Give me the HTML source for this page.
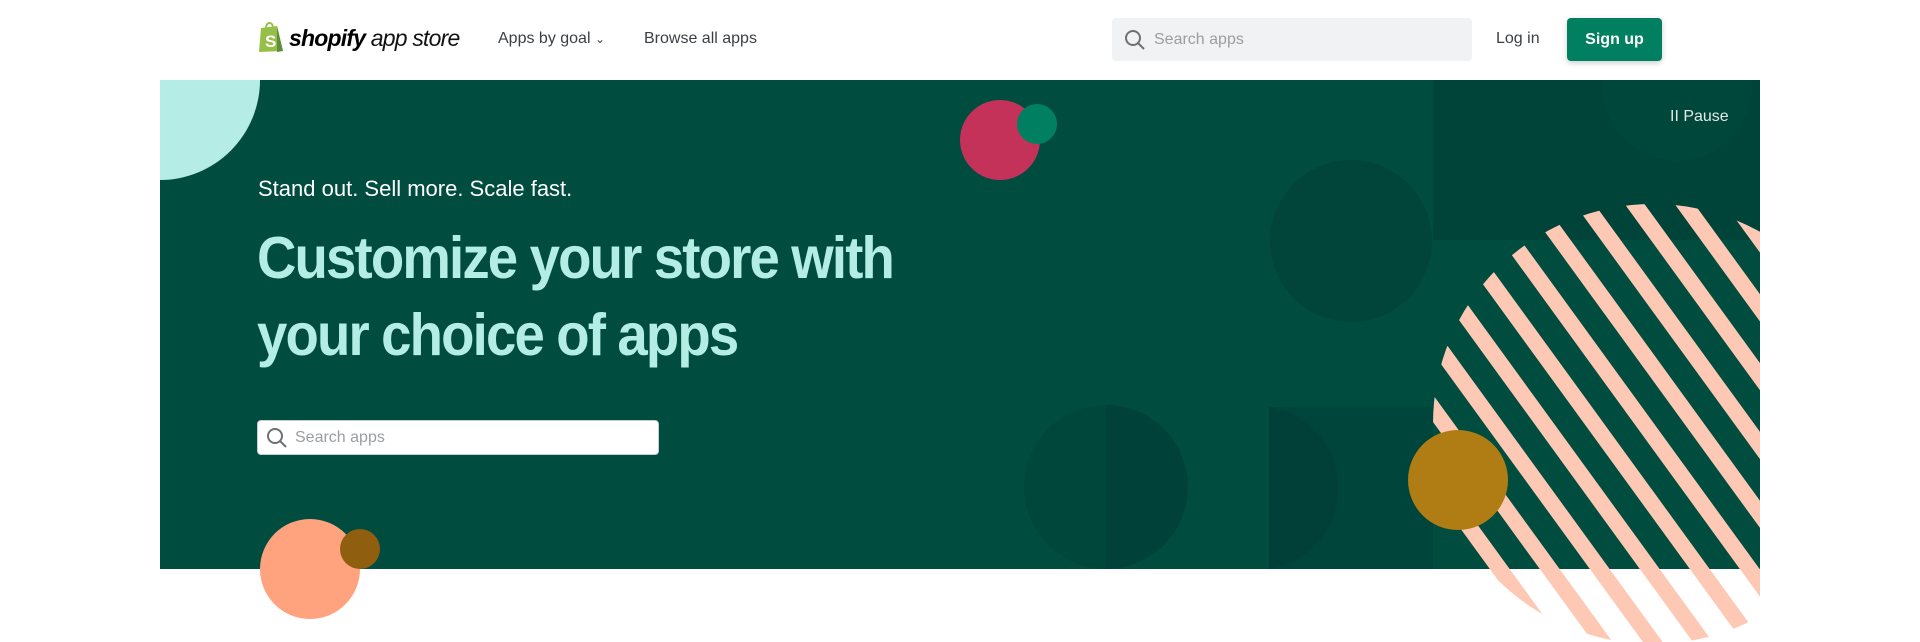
<!DOCTYPE html>
<html><head><meta charset="utf-8"><style>
*{margin:0;padding:0;box-sizing:border-box}
html,body{width:1920px;height:642px;overflow:hidden}
body{background:#fff;font-family:"Liberation Sans",sans-serif;position:relative}
.hdr{position:absolute;left:0;top:0;width:1920px;height:80px}
.nav{position:absolute;top:30px;font-size:16px;color:#3b3f45}
.sbox{position:absolute;left:1112px;top:18px;width:360px;height:43px;background:#f1f2f3;border-radius:4px}
.sbox span{position:absolute;left:42px;top:13px;font-size:16px;color:#9a9ea3}
.btn{position:absolute;left:1567px;top:18px;width:95px;height:43px;background:#008060;border-radius:4px;color:#fff;font-weight:bold;font-size:16px;text-align:center;line-height:43px;box-shadow:0 2px 6px rgba(0,0,0,.2)}
.banner{position:absolute;left:160px;top:80px;width:1600px;height:489px;background:#004c3f;overflow:hidden}
.tag{position:absolute;left:98px;top:96px;font-size:22px;color:#fff}
h1{position:absolute;left:97px;top:140px;font-size:59px;line-height:77px;color:#b3ede4;font-weight:bold;letter-spacing:-2px;white-space:nowrap;transform:scaleX(.925);transform-origin:left top}
.bs{position:absolute;left:97px;top:340px;width:402px;height:35px;background:#fff;border:1px solid #c4cdd5;border-radius:4px}
.bs span{position:absolute;left:37px;top:8px;font-size:16px;color:#9a9ea3}
.pause{position:absolute;left:1510px;top:28px;color:#e3e8e6;font-size:16px}
</style></head><body>
<div class="hdr">
<svg style="position:absolute;left:257px;top:20px" width="28" height="33" viewBox="0 0 28 33"><path d="M4 8 L20 6 L26 31 L2 32 Z" fill="#95bf47"/><path d="M20 6 L26 31 L20 32 Z" fill="#5e8e3e"/><path d="M9 8 C9 2 15 1 16 7" stroke="#95bf47" stroke-width="2" fill="none"/><text x="8" y="27" font-family="Liberation Sans" font-weight="bold" font-size="17" fill="#fff">S</text></svg>
<div style="position:absolute;left:289px;top:25px;font-size:23px;font-style:italic;letter-spacing:-0.8px"><b style="color:#000">shopify</b><span style="color:#111;font-weight:300"> app store</span></div>
<div class="nav" style="left:498px">Apps by goal <span style="font-size:12px">&#8964;</span></div>
<div class="nav" style="left:644px">Browse all apps</div>
<div class="sbox"><svg style="position:absolute;left:12px;top:11px" width="22" height="22" viewBox="0 0 22 22"><circle cx="9" cy="9" r="7" stroke="#6d7175" stroke-width="2" fill="none"/><path d="M14 14 L20 20" stroke="#6d7175" stroke-width="2"/></svg><span>Search apps</span></div>
<div class="nav" style="left:1496px">Log in</div>
<div class="btn">Sign up</div>
</div>
<div class="banner">
<svg style="position:absolute;left:0;top:0" width="1600" height="489">
<g fill="#00443a">
<circle cx="1191" cy="161" r="81"/>
<path d="M1273 0 L1273 160 A80 80 0 0 0 1273 0 Z" fill="#004639"/>
<rect x="1273" y="0" width="327" height="160" fill="#004338"/>
<circle cx="1517" cy="6" r="75" fill="#00473b"/>
<circle cx="946" cy="407" r="82" fill="#00473b"/>
<path d="M946 325 A82 82 0 0 1 946 489 Z" fill="#00423a"/>
<rect x="1109" y="327" width="164" height="162" fill="#00453b"/>
<path d="M1109 327 A82 82 0 0 1 1109 489 Z" fill="#004038"/>
</g>
<circle cx="0" cy="0" r="100" fill="#b5ede6"/>
<circle cx="840" cy="60" r="40" fill="#c4325a"/>
<circle cx="877" cy="44" r="20" fill="#008060"/>
</svg>
<div class="tag">Stand out. Sell more. Scale fast.</div>
<h1>Customize your store with<br>your choice of apps</h1>
<div class="bs"><svg style="position:absolute;left:8px;top:6px" width="22" height="22" viewBox="0 0 22 22"><circle cx="9" cy="9" r="7" stroke="#6d7175" stroke-width="2" fill="none"/><path d="M14 14 L20 20" stroke="#6d7175" stroke-width="2"/></svg><span>Search apps</span></div>
<div class="pause">II Pause</div>
</div>
<svg style="position:absolute;left:0;top:0" width="1920" height="642">
<defs><clipPath id="c"><circle cx="1653" cy="424" r="220"/></clipPath>
<clipPath id="r"><rect x="0" y="0" width="1760" height="642"/></clipPath></defs>
<circle cx="310" cy="569" r="50" fill="#ffa27e"/>
<circle cx="360" cy="549" r="20" fill="#8f5e0f"/>
<g clip-path="url(#r)"><g clip-path="url(#c)">
<g stroke="#fdc9b4" stroke-width="16">
<line x1="1150" y1="-50" x2="1700" y2="707"/>
<line x1="1200" y1="-50" x2="1750" y2="707"/>
<line x1="1250" y1="-50" x2="1800" y2="707"/>
<line x1="1300" y1="-50" x2="1850" y2="707"/>
<line x1="1350" y1="-50" x2="1900" y2="707"/>
<line x1="1400" y1="-50" x2="1950" y2="707"/>
<line x1="1450" y1="-50" x2="2000" y2="707"/>
<line x1="1500" y1="-50" x2="2050" y2="707"/>
<line x1="1550" y1="-50" x2="2100" y2="707"/>
<line x1="1600" y1="-50" x2="2150" y2="707"/>
<line x1="1100" y1="-50" x2="1650" y2="707"/>
<line x1="1050" y1="-50" x2="1600" y2="707"/>
<line x1="1000" y1="-50" x2="1550" y2="707"/>
<line x1="950" y1="-50" x2="1500" y2="707"/>
<line x1="900" y1="-50" x2="1450" y2="707"/>
<line x1="850" y1="-50" x2="1400" y2="707"/>
<line x1="800" y1="-50" x2="1350" y2="707"/>
</g></g>
<circle cx="1458" cy="480" r="50" fill="#b07d14"/></g>
</svg>
</body></html>
